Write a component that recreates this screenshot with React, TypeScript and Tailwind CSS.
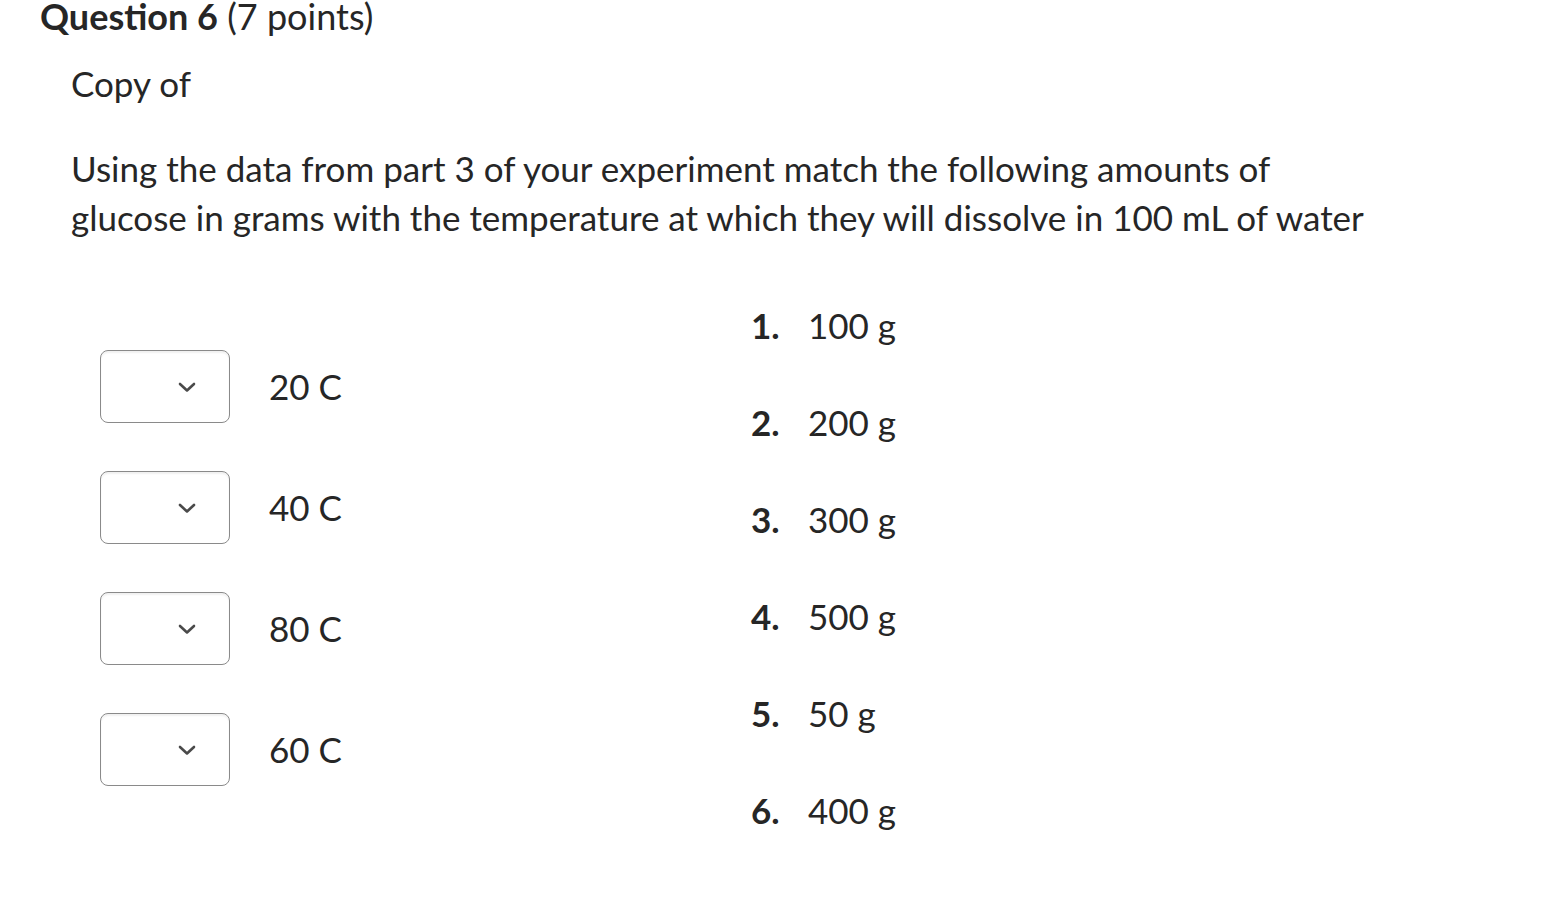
import React from 'react';

const rows = ['20 C', '40 C', '80 C', '60 C'];
const answers = ['100 g', '200 g', '300 g', '500 g', '50 g', '400 g'];

function Chevron() {
  return (
    <svg width="18" height="12" viewBox="0 0 18 12" fill="none">
      <path d="M2 3l7 6.5L16 3" stroke="#4a4a4a" strokeWidth="2.6" strokeLinecap="round" strokeLinejoin="round" />
    </svg>
  );
}

export default function App() {
  return (
    <div className="min-h-screen bg-white text-[#262626]" style={{ fontFamily: 'Lato, "Open Sans", sans-serif' }}>
      <h2 className="pl-[40px] text-[36px] leading-[32px] font-normal">
        <span className="font-bold">Question 6</span> (7 points)
      </h2>

      <div className="pl-[71px]">
        <p className="mt-[33px] text-[35px] leading-[36px]">Copy of</p>
        <p className="mt-[43px] text-[35px] leading-[49px] w-[1300px]">
          Using the data from part 3 of your experiment match the following amounts of glucose in grams with the temperature at which they will dissolve in 100 mL of water
        </p>

        <div className="mt-[35px] flex">
          <div className="pl-[29px] pt-[73px] flex flex-col gap-[48px] w-[680px]">
            {rows.map((r) => (
              <div key={r} className="flex items-center h-[73px]">
                <div className="w-[130px] h-[73px] rounded-[8px] border border-[#8a8a8a] shadow-[inset_0_2px_2px_rgba(0,0,0,0.06)] flex items-center justify-end pr-[33px]">
                  <Chevron />
                </div>
                <span className="ml-[39px] text-[35px]">{r}</span>
              </div>
            ))}
          </div>
          <ol>
            {answers.map((a, i) => (
              <li key={a} className="h-[97px] flex items-center text-[35px]">
                <span className="font-bold w-[57px]">{i + 1}.</span>
                <span>{a}</span>
              </li>
            ))}
          </ol>
        </div>
      </div>
    </div>
  );
}
